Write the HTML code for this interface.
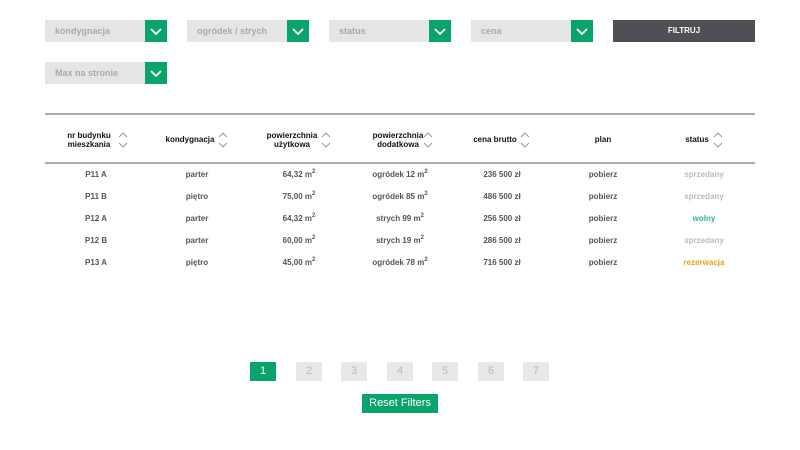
<!DOCTYPE html><html><head><style>
body{margin:0;width:800px;height:450px;background:#fff;font-family:"Liberation Sans",sans-serif;position:relative;overflow:hidden}
.sel{position:absolute;width:122px;height:22px;background:#e5e5e5}
.sel span{position:absolute;left:10px;top:6px;font-size:9px;color:#aaa;font-weight:bold}
.sel i{position:absolute;right:0;top:0;width:22px;height:22px;background:#0aa36a}
.sel i svg{position:absolute;left:5px;top:6px}
.btn{position:absolute;left:613px;top:20px;width:142px;height:22px;background:#4f5055;color:#fff;font-size:8px;font-weight:bold;text-align:center;line-height:22px}
.line{position:absolute;left:45px;width:710px;height:2px;background:#aaa}
.c{position:absolute;font-size:8px;font-weight:bold;text-align:center;transform:translateX(-50%);white-space:nowrap}
.h{color:#111;line-height:9px}
.d{color:#555}
sup{font-size:6px;vertical-align:4px;line-height:0}
.ar{position:absolute}
.pg{position:absolute;top:362px;width:26px;height:19px;background:#e8e8e8;color:#bbb;font-size:11px;text-align:center;line-height:19px}
</style></head><body>
<div class="sel" style="left:45px;top:20px"><span>kondygnacja</span><i><svg width="12" height="10"><path d="M1 3l5 5 5-5" stroke="#fff" stroke-width="1.8" fill="none"/></svg></i></div>
<div class="sel" style="left:187px;top:20px"><span>ogródek / strych</span><i><svg width="12" height="10"><path d="M1 3l5 5 5-5" stroke="#fff" stroke-width="1.8" fill="none"/></svg></i></div>
<div class="sel" style="left:329px;top:20px"><span>status</span><i><svg width="12" height="10"><path d="M1 3l5 5 5-5" stroke="#fff" stroke-width="1.8" fill="none"/></svg></i></div>
<div class="sel" style="left:471px;top:20px"><span>cena</span><i><svg width="12" height="10"><path d="M1 3l5 5 5-5" stroke="#fff" stroke-width="1.8" fill="none"/></svg></i></div>
<div class="btn">FILTRUJ</div>
<div class="sel" style="left:45px;top:62px"><span>Max na stronie</span><i><svg width="12" height="10"><path d="M1 3l5 5 5-5" stroke="#fff" stroke-width="1.8" fill="none"/></svg></i></div>
<div class="line" style="top:113px"></div>
<div class="line" style="top:162px"></div>
<div class="c h" style="left:89px;top:131px">nr budynku<br>mieszkania</div>
<div class="c h" style="left:190px;top:135px">kondygnacja</div>
<div class="c h" style="left:292px;top:131px">powierzchnia<br>użytkowa</div>
<div class="c h" style="left:398px;top:131px">powierzchnia<br>dodatkowa</div>
<div class="c h" style="left:495px;top:135px">cena brutto</div>
<div class="c h" style="left:603px;top:135px">plan</div>
<div class="c h" style="left:697px;top:135px">status</div>
<svg class="ar" style="left:118px;top:132px" width="10" height="16"><path d="M1 5l4-4 4 4M1 11l4 4 4-4" stroke="#999" fill="none"/></svg>
<svg class="ar" style="left:218px;top:132px" width="10" height="16"><path d="M1 5l4-4 4 4M1 11l4 4 4-4" stroke="#999" fill="none"/></svg>
<svg class="ar" style="left:321px;top:132px" width="10" height="16"><path d="M1 5l4-4 4 4M1 11l4 4 4-4" stroke="#999" fill="none"/></svg>
<svg class="ar" style="left:423px;top:132px" width="10" height="16"><path d="M1 5l4-4 4 4M1 11l4 4 4-4" stroke="#999" fill="none"/></svg>
<svg class="ar" style="left:520px;top:132px" width="10" height="16"><path d="M1 5l4-4 4 4M1 11l4 4 4-4" stroke="#999" fill="none"/></svg>
<svg class="ar" style="left:713px;top:132px" width="10" height="16"><path d="M1 5l4-4 4 4M1 11l4 4 4-4" stroke="#999" fill="none"/></svg>

<div class="c d" style="left:96px;top:170px">P11 A</div><div class="c d" style="left:197px;top:170px">parter</div><div class="c d" style="left:299px;top:170px">64,32 m<sup>2</sup></div><div class="c d" style="left:400px;top:170px">ogródek 12 m<sup>2</sup></div><div class="c d" style="left:502px;top:170px">236 500 zł</div><div class="c d" style="left:603px;top:170px">pobierz</div><div class="c" style="left:704px;top:170px;color:#bbb">sprzedany</div>
<div class="c d" style="left:96px;top:192px">P11 B</div><div class="c d" style="left:197px;top:192px">piętro</div><div class="c d" style="left:299px;top:192px">75,00 m<sup>2</sup></div><div class="c d" style="left:400px;top:192px">ogródek 85 m<sup>2</sup></div><div class="c d" style="left:502px;top:192px">486 500 zł</div><div class="c d" style="left:603px;top:192px">pobierz</div><div class="c" style="left:704px;top:192px;color:#bbb">sprzedany</div>
<div class="c d" style="left:96px;top:214px">P12 A</div><div class="c d" style="left:197px;top:214px">parter</div><div class="c d" style="left:299px;top:214px">64,32 m<sup>2</sup></div><div class="c d" style="left:400px;top:214px">strych 99 m<sup>2</sup></div><div class="c d" style="left:502px;top:214px">256 500 zł</div><div class="c d" style="left:603px;top:214px">pobierz</div><div class="c" style="left:704px;top:214px;color:#3bb37a">wolny</div>
<div class="c d" style="left:96px;top:236px">P12 B</div><div class="c d" style="left:197px;top:236px">parter</div><div class="c d" style="left:299px;top:236px">60,00 m<sup>2</sup></div><div class="c d" style="left:400px;top:236px">strych 19 m<sup>2</sup></div><div class="c d" style="left:502px;top:236px">286 500 zł</div><div class="c d" style="left:603px;top:236px">pobierz</div><div class="c" style="left:704px;top:236px;color:#bbb">sprzedany</div>
<div class="c d" style="left:96px;top:258px">P13 A</div><div class="c d" style="left:197px;top:258px">piętro</div><div class="c d" style="left:299px;top:258px">45,00 m<sup>2</sup></div><div class="c d" style="left:400px;top:258px">ogródek 78 m<sup>2</sup></div><div class="c d" style="left:502px;top:258px">716 500 zł</div><div class="c d" style="left:603px;top:258px">pobierz</div><div class="c" style="left:704px;top:258px;color:#e3a21a">rezerwacja</div>

<div class="pg" style="left:250px;background:#0aa36a;color:#fff">1</div>
<div class="pg" style="left:296px">2</div>
<div class="pg" style="left:341px">3</div>
<div class="pg" style="left:387px">4</div>
<div class="pg" style="left:432px">5</div>
<div class="pg" style="left:478px">6</div>
<div class="pg" style="left:523px">7</div>
<div style="position:absolute;left:362px;top:394px;width:76px;height:19px;background:#0aa36a;color:#fff;font-size:11px;text-align:center;line-height:19px">Reset Filters</div>
</body></html>
